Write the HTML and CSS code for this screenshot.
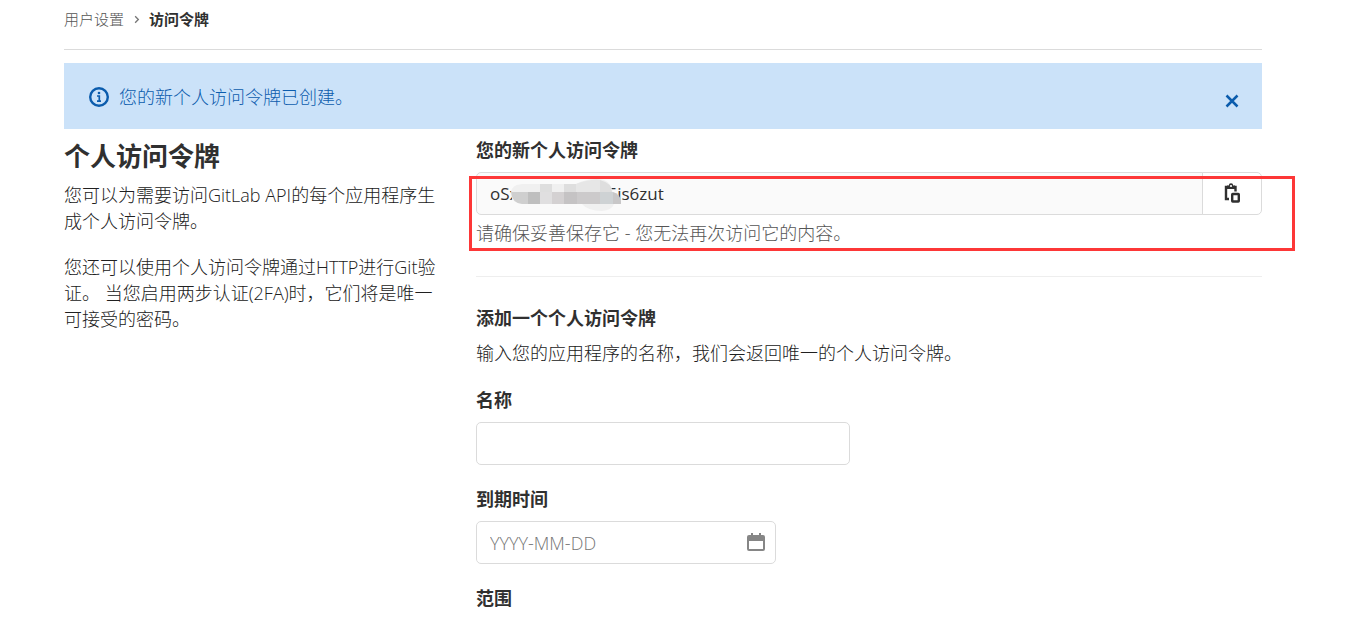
FILE: index.html
```
<!DOCTYPE html>
<html lang="zh-CN">
<head>
<meta charset="utf-8">
<meta name="viewport" content="width=device-width, initial-scale=1">
<title>访问令牌</title>
<link rel="stylesheet" href="styles.css">
</head>
<body>
<div class="page">
  <nav class="breadcrumbs" aria-label="面包屑">
    <a class="crumb" href="#">用户设置</a>
    <svg class="crumb-arrow" viewBox="0 0 10 10" aria-hidden="true"><path d="M3.5 1.5 7 5 3.5 8.5"/></svg>
    <a class="crumb crumb-current" href="#" aria-current="page">访问令牌</a>
  </nav>

  <div class="alert" role="status">
    <svg class="alert-icon" viewBox="0 0 20 20" aria-hidden="true">
      <circle cx="10" cy="10" r="8.800" fill="none" stroke="currentColor" stroke-width="2.4"/>
      <circle cx="10" cy="6" r="1.300" fill="currentColor"/>
      <path d="M8 9H10.300V14M8 14.200H12" fill="none" stroke="currentColor" stroke-width="1.700"/>
    </svg>
    <span class="alert-text">您的新个人访问令牌已创建。</span>
    <button class="alert-close" type="button" aria-label="关闭">
      <svg viewBox="0 0 14 14" aria-hidden="true"><path d="M1.5 1.5l11 11M12.500 1.500l-11 11"/></svg>
    </button>
  </div>

  <div class="row">
    <section class="column intro">
      <h1 class="title">个人访问令牌</h1>
      <p class="text">您可以为需要访问GitLab API的每个应用程序生成个人访问令牌。</p>
      <p class="text">您还可以使用个人访问令牌通过HTTP进行Git验证。 当您启用两步认证(2FA)时，它们将是唯一可接受的密码。</p>
    </section>

    <main class="column">
      <label class="label" for="token">您的新个人访问令牌</label>
      <div class="token-area">
        <div class="token-group">
          <input class="field token-field" id="token" type="text" value="oSxxxxxxxxxxx5is6zut" readonly>
          <button class="copy-button" type="button" aria-label="复制个人访问令牌">
            <svg viewBox="0 0 18 22" aria-hidden="true">
              <path class="line" d="M6 17H3V5H5.500M11 5H12.500V9.500"/>
              <path d="M4 3.500h1.800a2.200 2.200 0 0 1 4.400 0H12V7H4z"/>
              <circle class="hole" cx="8" cy="4" r="1.100"/>
              <rect class="line" x="9.200" y="12" width="6.600" height="7.500" rx="0.500"/>
            </svg>
          </button>
        </div>
        <svg class="redaction" viewBox="0 0 114 36" aria-hidden="true">
          <path fill="#f0f0f0" d="M1 18Q0 8 12 7L66 7Q80 0 94 3 102 6 103 18L111 24V27H104Q102 33 92 34 78 34 72 27H12Q2 26 1 18Z"/>
          <path fill="#dedede" d="M30 7h12v8H30zM54 7h12v8H54zM90 3q12 3 12 12H90z"/>
          <path fill="#e6e6e6" d="M66 7q14-5 24-4v12H66z"/>
          <path fill="#cfcfcf" d="M1 15h17v12h-6Q2 26 1 15z"/>
          <path fill="#bfbfbf" d="M18 15h12v12H18z"/>
          <path fill="#e0dfe0" d="M30 15h12v12H30z"/>
          <path fill="#d4d1d2" d="M42 15h12v12H42z"/>
          <path fill="#c5c3c4" d="M54 15h13v12H54z"/>
          <path fill="#cccacb" d="M67 15h23v12H67z"/>
          <path fill="#ced2d4" d="M90 15h13v12H90z"/>
          <path fill="#c8c7c8" d="M103 15q7 2 8 9v3h-8z"/>
        </svg>
        <p class="help">请确保妥善保存它 - 您无法再次访问它的内容。</p>
        <div class="highlight" aria-hidden="true"></div>
      </div>

      <hr class="divider">

      <h2 class="label">添加一个个人访问令牌</h2>
      <p class="text form-intro">输入您的应用程序的名称，我们会返回唯一的个人访问令牌。</p>
      <form>
        <div class="form-group">
          <label class="label" for="name">名称</label>
          <input class="field name-field" id="name" type="text">
        </div>
        <div class="form-group">
          <label class="label" for="expires">到期时间</label>
          <div class="date-wrap">
            <input class="field" id="expires" type="text" placeholder="YYYY-MM-DD">
            <svg class="calendar" viewBox="0 0 18 18" aria-hidden="true">
              <rect x="1" y="3" width="16" height="14" rx="1"/>
              <path d="M1 5h16M1 7h16M5 0v4M13 0v4"/>
            </svg>
          </div>
        </div>
        <h3 class="label">范围</h3>
      </form>
    </main>
  </div>
</div>
</body>
</html>
```
FILE: styles.css
```
* {
  box-sizing: border-box;
}

body {
  margin: 0;
  background: #fff;
  color: #202020;
  font: 300 18px/26px "Open Sans", "Noto Sans CJK SC", sans-serif;
}

h1, h2, h3, p {
  margin: 0;
}

.page {
  padding: 0 100px 0 64px;
}

.breadcrumbs {
  display: flex;
  align-items: center;
  gap: 8px;
  padding: 6px 0 17px;
  border-bottom: 1px solid #dbdbdb;
  font-size: 15px;
}

.crumb {
  color: #555;
  text-decoration: none;
}

.crumb-current {
  color: #303030;
  font-weight: 700;
}

.crumb-arrow {
  width: 9px;
  height: 9px;
  fill: none;
  stroke: #777;
  stroke-width: 1.5;
}

.alert {
  display: flex;
  align-items: center;
  gap: 10px;
  margin-top: 13px;
  padding: 21px 23px 19px 25px;
  background: #cbe2f9;
  color: #0b5cad;
}

.alert-icon {
  width: 20px;
  height: 20px;
}

.alert-text {
  flex: 1;
}

.alert-close {
  display: grid;
  place-items: center;
  width: 14px;
  height: 26px;
  padding: 8px 0 0;
  border: 0;
  background: none;
  color: inherit;
}

.alert-close svg {
  width: 14px;
  height: 14px;
  fill: none;
  stroke: currentColor;
  stroke-width: 2.5;
}

.row {
  display: grid;
  grid-template-columns: 1fr 2fr;
  margin: 0 -19px;
}

.column {
  min-width: 0;
  padding: 8px 19px 0;
}

.title {
  margin-bottom: 7px;
  color: #303030;
  font-size: 26px;
  line-height: 38px;
  font-weight: 700;
}

.intro .text {
  margin-bottom: 20px;
}

.label {
  display: block;
  margin-bottom: 9px;
  color: #303030;
  font-size: 18px;
  line-height: 26px;
  font-weight: 700;
}

.field {
  display: block;
  width: 100%;
  height: 43px;
  padding: 0 13px;
  border: 1px solid #dbdbdb;
  border-radius: 5px;
  background: #fff;
  color: #303030;
  font: inherit;
}

.field::placeholder {
  color: #757575;
  opacity: 1;
}

.token-area {
  position: relative;
}

.token-group {
  display: flex;
}

.token-field {
  flex: 1;
  min-width: 0;
  border-radius: 5px 0 0 5px;
  background: #fafafa;
  font-size: 17px;
  font-weight: 400;
}

.copy-button {
  display: grid;
  place-items: center;
  width: 60px;
  margin-left: -1px;
  padding: 0 0 2px;
  border: 1px solid #dbdbdb;
  border-radius: 0 5px 5px 0;
  background: #fff;
  color: #303030;
}

.copy-button svg {
  width: 18px;
  height: 22px;
  fill: currentColor;
}

.copy-button .line {
  fill: none;
  stroke: currentColor;
  stroke-width: 2.4;
}

.copy-button .hole {
  fill: #fff;
}

.redaction {
  position: absolute;
  top: 5px;
  left: 34px;
  width: 114px;
  height: 36px;
}

.help {
  padding-top: 5px;
  color: #555;
}

.highlight {
  position: absolute;
  inset: 4px -33px -5px -7px;
  border: 3px solid #fd3737;
  pointer-events: none;
}

.divider {
  margin: 30px 0 28px;
  border: 0;
  border-top: 1px solid #eee;
}

.form-intro {
  margin-bottom: 21px;
}

.form-group {
  margin-bottom: 21px;
}

.name-field {
  width: calc(50% - 19px);
}

.date-wrap {
  position: relative;
  max-width: 300px;
}

.calendar {
  position: absolute;
  top: 12px;
  right: 11px;
  width: 18px;
  height: 18px;
  fill: none;
  stroke: #868686;
  stroke-width: 2;
}
```
